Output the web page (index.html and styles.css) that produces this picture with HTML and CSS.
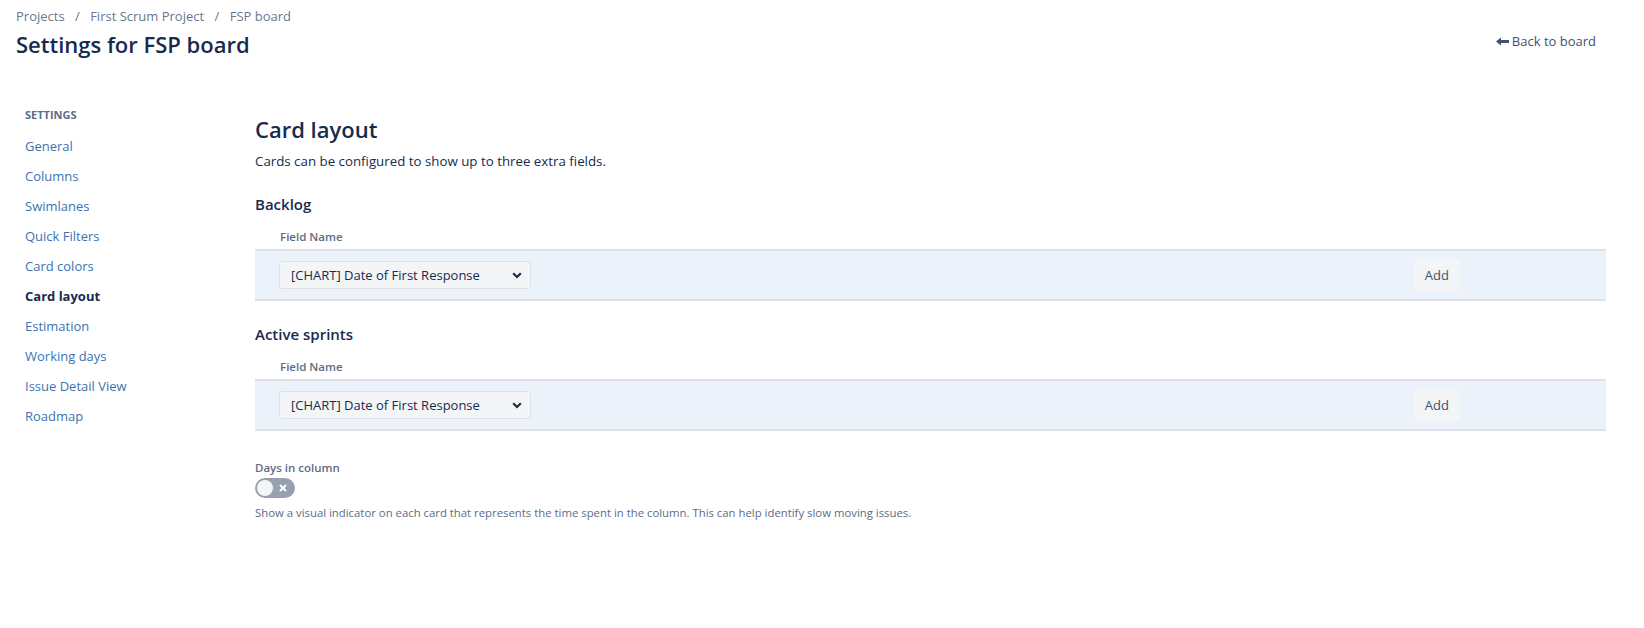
FILE: index.html
```html
<!DOCTYPE html>
<html lang="en">
<head>
    <meta charset="UTF-8">
    <meta name="viewport" content="width=device-width, initial-scale=1.0">
    <title>Settings for FSP board</title>
    <link rel="stylesheet" href="styles.css">
</head>
<body>
    <header class="page-header">
        <div class="header-left">
            <nav class="breadcrumbs">
                <a href="#">Projects</a>
                <span class="sep">/</span>
                <a href="#">First Scrum Project</a>
                <span class="sep">/</span>
                <a href="#">FSP board</a>
            </nav>
            <h1>Settings for FSP board</h1>
        </div>
        <a class="back-link" href="#">
            <svg width="13" height="9" viewBox="0 0 13 9"><path d="M0 4.5 L5 0.5 L5 3 L13 3 L13 6 L5 6 L5 8.5 Z" fill="#42526e"/></svg>
            Back to board
        </a>
    </header>

    <div class="layout">
        <aside class="sidebar">
            <h4>Settings</h4>
            <ul>
                <li><a href="#">General</a></li>
                <li><a href="#">Columns</a></li>
                <li><a href="#">Swimlanes</a></li>
                <li><a href="#">Quick Filters</a></li>
                <li><a href="#">Card colors</a></li>
                <li><a href="#" class="active">Card layout</a></li>
                <li><a href="#">Estimation</a></li>
                <li><a href="#">Working days</a></li>
                <li><a href="#">Issue Detail View</a></li>
                <li><a href="#">Roadmap</a></li>
            </ul>
        </aside>

        <main class="content">
            <h2>Card layout</h2>
            <p class="intro">Cards can be configured to show up to three extra fields.</p>

            <section class="field-section">
                <h3>Backlog</h3>
                <div class="field-head">Field Name</div>
                <div class="field-row">
                    <div class="select-wrap">
                        <select>
                            <option>[CHART] Date of First Response</option>
                        </select>
                        <svg class="chevron" width="10" height="7" viewBox="0 0 10 7"><path d="M1.2 1.2 L5 5 L8.8 1.2" stroke="#172b4d" stroke-width="2.2" fill="none"/></svg>
                    </div>
                    <button class="add-btn">Add</button>
                </div>
            </section>

            <section class="field-section">
                <h3>Active sprints</h3>
                <div class="field-head">Field Name</div>
                <div class="field-row">
                    <div class="select-wrap">
                        <select>
                            <option>[CHART] Date of First Response</option>
                        </select>
                        <svg class="chevron" width="10" height="7" viewBox="0 0 10 7"><path d="M1.2 1.2 L5 5 L8.8 1.2" stroke="#172b4d" stroke-width="2.2" fill="none"/></svg>
                    </div>
                    <button class="add-btn">Add</button>
                </div>
            </section>

            <div class="days-column">
                <div class="days-label">Days in column</div>
                <div class="toggle">
                    <span class="knob"></span>
                    <svg class="cross" width="8" height="8" viewBox="0 0 8 8"><path d="M1 1 L7 7 M7 1 L1 7" stroke="#fff" stroke-width="2"/></svg>
                </div>
                <p class="days-help">Show a visual indicator on each card that represents the time spent in the column. This can help identify slow moving issues.</p>
            </div>
        </main>
    </div>
</body>
</html>
```

FILE: styles.css
```css
body {
    font-family: "Open Sans", "Noto Sans", sans-serif;
    color: #172b4d;
    margin: 0;
    padding: 0 38px 0 16px;
    background: #ffffff;
    font-size: 14px;
}

a {
    text-decoration: none;
}

.page-header {
    display: flex;
    justify-content: space-between;
    align-items: flex-start;
    padding-top: 6px;
}

.breadcrumbs {
    font-size: 13px;
    line-height: 20px;
    color: #6b778c;
}

.breadcrumbs a {
    color: #6b778c;
}

.breadcrumbs .sep {
    margin: 0 7px;
}

h1 {
    font-size: 22px;
    font-weight: 600;
    margin: 3px 0 0;
    line-height: 30px;
}

.back-link {
    display: flex;
    align-items: center;
    gap: 3px;
    color: #42526e;
    font-size: 13px;
    margin-top: 26px;
    margin-right: 10px;
}

.layout {
    display: flex;
    margin-top: 48px;
}

.sidebar {
    width: 230px;
    flex-shrink: 0;
    padding-left: 9px;
}

.sidebar h4 {
    margin: 0 0 8px;
    font-size: 11px;
    font-weight: 700;
    text-transform: uppercase;
    color: #5e6c84;
    line-height: 16px;
}

.sidebar ul {
    list-style: none;
    margin: 0;
    padding: 0;
}

.sidebar li a {
    display: block;
    line-height: 30px;
    font-size: 13px;
    color: #3b73af;
}

.sidebar li a.active {
    color: #172b4d;
    font-weight: 700;
}

.content {
    flex: 1;
}

h2 {
    font-size: 22px;
    font-weight: 600;
    margin: 7px 0 0;
    line-height: 30px;
}

.intro {
    margin: 7px 0 0;
    font-size: 13.3px;
    line-height: 20px;
}

.field-section {
    margin-top: 21px;
}

.field-section + .field-section {
    margin-top: 21px;
}

h3 {
    font-size: 15px;
    font-weight: 600;
    margin: 0;
    line-height: 24px;
}

.field-head {
    font-size: 11.5px;
    font-weight: 600;
    color: #5e6c84;
    padding: 12px 0 0 25px;
    line-height: 18px;
}

.field-row {
    display: flex;
    justify-content: space-between;
    align-items: center;
    background: #ebf2f9;
    border-top: 2px solid #dfe1e6;
    border-bottom: 2px solid #dfe1e6;
    padding: 8px 146px 8px 24px;
    margin-top: 3px;
}

.select-wrap {
    position: relative;
}

.select-wrap select {
    appearance: none;
    -webkit-appearance: none;
    width: 252px;
    height: 28px;
    padding: 0 30px 0 11px;
    font-family: inherit;
    font-size: 13px;
    color: #172b4d;
    background: #f4f5f7;
    border: 1px solid #dfe1e6;
    border-radius: 3px;
}

.chevron {
    position: absolute;
    right: 9px;
    top: 11px;
    pointer-events: none;
}

.add-btn {
    height: 32px;
    padding: 0 11px;
    font-family: inherit;
    font-size: 13px;
    color: #42526e;
    background: #f4f5f7;
    border: none;
    border-radius: 3px;
}

.days-column {
    margin-top: 29px;
}

.days-label {
    font-size: 11.5px;
    font-weight: 600;
    color: #5e6c84;
    line-height: 16px;
}

.toggle {
    position: relative;
    width: 40px;
    height: 20px;
    border-radius: 10px;
    background: #97a0af;
    margin-top: 2px;
}

.toggle .knob {
    position: absolute;
    left: 2px;
    top: 2px;
    width: 16px;
    height: 16px;
    border-radius: 50%;
    background: #f4f5f7;
}

.toggle .cross {
    position: absolute;
    right: 8px;
    top: 6px;
}

.days-help {
    margin: 7px 0 0;
    font-size: 11.35px;
    color: #5e6c84;
}
```
